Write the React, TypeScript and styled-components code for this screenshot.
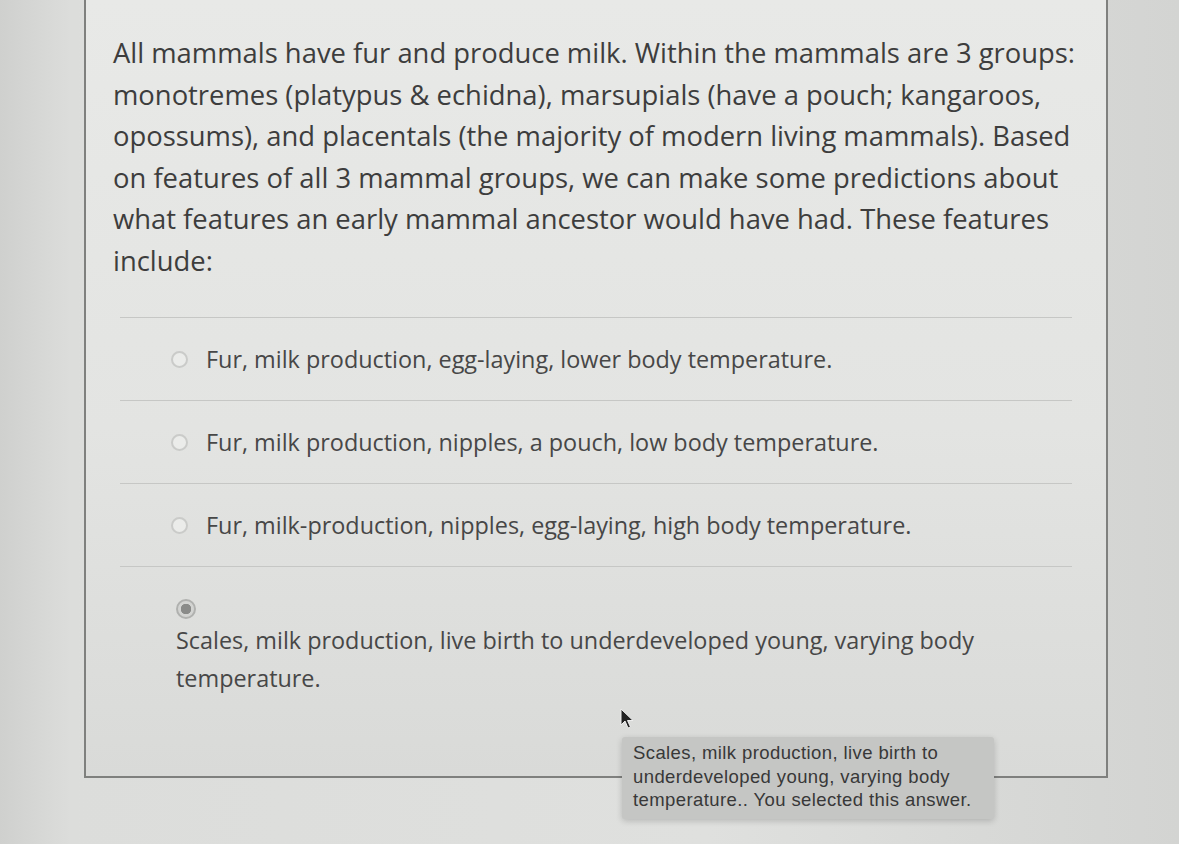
import React from "react";
import styled, { createGlobalStyle } from "styled-components";

const GlobalStyle = createGlobalStyle`
  html, body {
    margin: 0;
    padding: 0;
    background: #d7d8d6;
    font-family: "Open Sans", "Liberation Sans", sans-serif;
  }
`;

const Screen = styled.div`
  position: relative;
  width: 1179px;
  height: 844px;
  overflow: hidden;
  background: linear-gradient(90deg, #cfd0ce 0%, #dcdddb 6%, #dfe0de 60%, #d3d4d2 100%);
`;

const Card = styled.div`
  margin-left: 84px;
  width: 1024px;
  height: 778px;
  box-sizing: border-box;
  border: 2px solid #7f807e;
  border-top: none;
  background: linear-gradient(180deg, #e8e9e7 0%, #e3e4e2 55%, #d9dad8 100%);
  padding: 32px 30px 0 27px;
`;

const Question = styled.p`
  margin: 0;
  width: 975px;
  font-size: 27.4px;
  line-height: 41.5px;
  color: #3d3d3d;
`;

const Options = styled.div`
  margin-top: 36px;
  display: flex;
  flex-direction: column;
`;

const Option = styled.div<{ $stacked?: boolean }>`
  border-top: 1.5px solid #c6c7c5;
  margin-left: 7px;
  margin-right: 4px;
  display: flex;
  flex-direction: ${(p) => (p.$stacked ? "column" : "row")};
  align-items: ${(p) => (p.$stacked ? "flex-start" : "center")};
  gap: ${(p) => (p.$stacked ? "2px" : "18px")};
  padding: ${(p) => (p.$stacked ? "32px 0 0 56px" : "0 0 0 51px")};
  height: ${(p) => (p.$stacked ? "auto" : "82px")};
`;

const Radio = styled.span<{ $checked?: boolean }>`
  flex: none;
  width: ${(p) => (p.$checked ? "20px" : "17px")};
  height: ${(p) => (p.$checked ? "20px" : "17px")};
  box-sizing: border-box;
  border-radius: 50%;
  border: 2px solid ${(p) => (p.$checked ? "#b0b1af" : "#cacbc9")};
  background: ${(p) => (p.$checked ? "radial-gradient(circle, #8a8b89 0 5px, #d3d4d2 5.5px)" : "#ebecea")};
`;

const Label = styled.span<{ $stacked?: boolean }>`
  font-size: 23.4px;
  line-height: ${(p) => (p.$stacked ? "38px" : "30px")};
  color: #474747;
  max-width: ${(p) => (p.$stacked ? "880px" : "none")};
`;

const Cursor = styled.svg`
  position: absolute;
  left: 620px;
  top: 708px;
`;

const Tooltip = styled.div`
  position: absolute;
  left: 622px;
  top: 737px;
  width: 372px;
  box-sizing: border-box;
  padding: 4px 10px 7px 11px;
  background: #c5c6c4;
  border-radius: 3px;
  box-shadow: 0 2px 6px rgba(0, 0, 0, 0.18);
  font-family: "Liberation Sans", Arial, sans-serif;
  font-size: 18.5px;
  letter-spacing: 0.4px;
  line-height: 23.5px;
  color: #383838;
`;

const answers = [
  "Fur, milk production, egg-laying, lower body temperature.",
  "Fur, milk production, nipples, a pouch, low body temperature.",
  "Fur, milk-production, nipples, egg-laying, high body temperature.",
];

export default function App() {
  return (
    <Screen>
      <GlobalStyle />
      <Card>
        <Question>
          All mammals have fur and produce milk. Within the mammals are 3 groups:
          monotremes (platypus &amp; echidna), marsupials (have a pouch; kangaroos,
          opossums), and placentals (the majority of modern living mammals). Based
          on features of all 3 mammal groups, we can make some predictions about
          what features an early mammal ancestor would have had. These features
          include:
        </Question>
        <Options>
          {answers.map((a) => (
            <Option key={a}>
              <Radio />
              <Label>{a}</Label>
            </Option>
          ))}
          <Option $stacked>
            <Radio $checked />
            <Label $stacked>
              Scales, milk production, live birth to underdeveloped young, varying body
              temperature.
            </Label>
          </Option>
        </Options>
      </Card>
      <Cursor width="14" height="22" viewBox="0 0 14 22">
        <path d="M1 1 L1 17 L5 13 L8 20 L10.5 19 L7.5 12.5 L13 12.5 Z" fill="#222" stroke="#eee" strokeWidth="1" />
      </Cursor>
      <Tooltip>
        Scales, milk production, live birth to underdeveloped young, varying body
        temperature.. You selected this answer.
      </Tooltip>
    </Screen>
  );
}
